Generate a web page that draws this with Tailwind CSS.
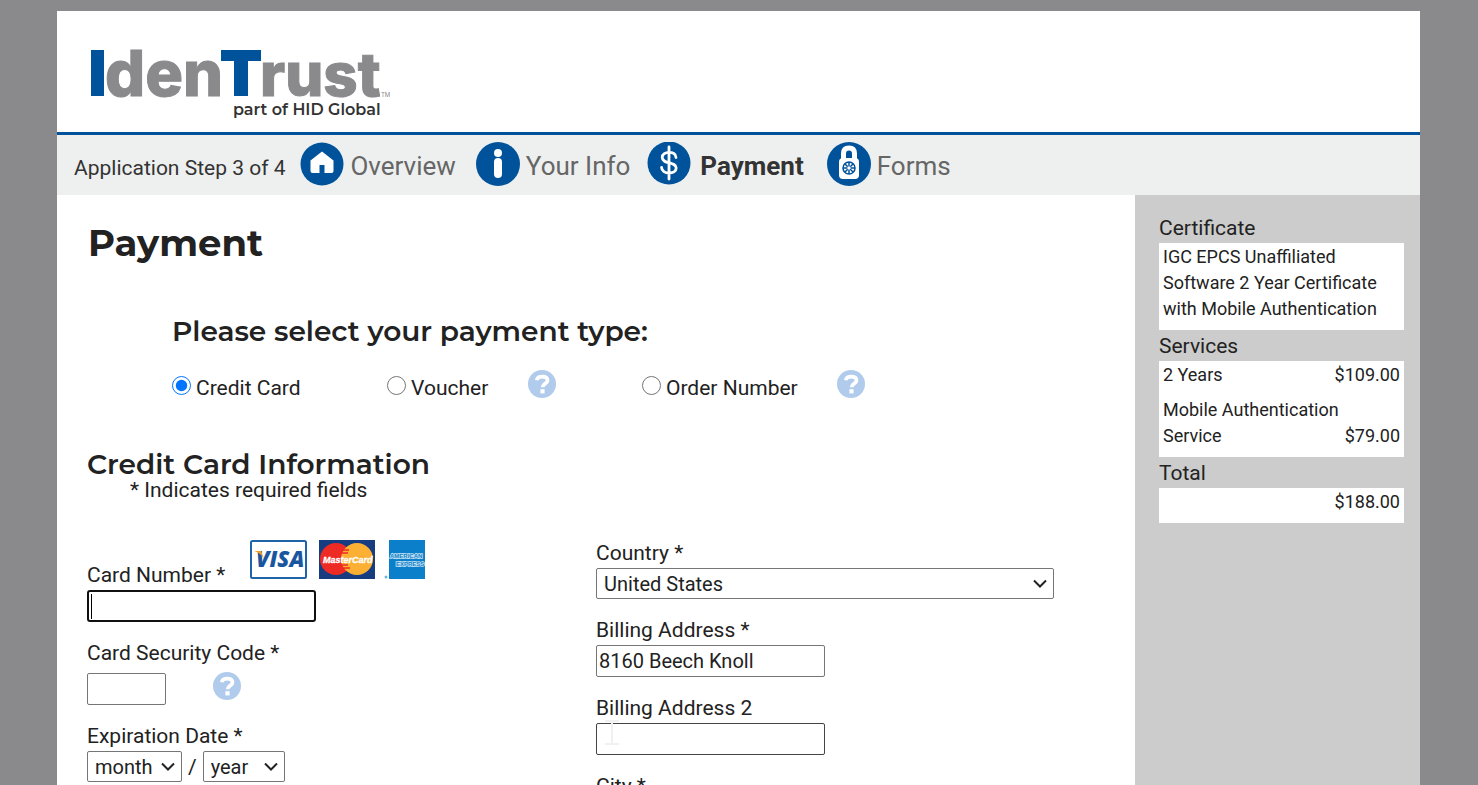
<!DOCTYPE html>
<html lang="en">
<head>
<meta charset="utf-8">
<meta name="viewport" content="width=device-width, initial-scale=1">
<title>IdenTrust - Payment</title>
<script src="https://cdn.jsdelivr.net/npm/@tailwindcss/browser@4"></script>
</head>
<body class="h-screen overflow-hidden bg-[#8a8a8c] pr-[58px] pl-[57px] pt-[11px] font-[Roboto,sans-serif] text-[21px] leading-[26px] text-[#222]">
<svg class="hidden" aria-hidden="true">
  <symbol id="help" viewBox="0 0 28 28">
    <circle cx="14" cy="14" r="14" fill="#b0cbeb"/>
    <path d="M8.800 10.200C9.200 7.400 11.400 6.600 14.200 6.600c3.200 0 5.300 1.300 5.300 3.800 0 3.300-4.900 3.100-4.900 6.800" fill="none" stroke="#fff" stroke-width="3.800"/>
    <rect x="12.400" y="19.200" width="4.200" height="4.200" fill="#fff"/>
  </symbol>
  <symbol id="chevron" viewBox="0 0 14 9">
    <path d="M1 1.500l6 6 6-6" fill="none" stroke="#222" stroke-width="2"/>
  </symbol>
</svg>
<div class="flex min-h-full flex-col bg-white">
  <header class="h-[124px] border-b-3 border-[#00539b] pl-[31px] pt-[32px]">
    <a href="#" aria-label="IdenTrust, part of HID Global">
      <svg class="h-[80px] w-[306px] overflow-visible" viewBox="0 0 306 80">
        <g font-family="Inter, sans-serif" font-weight="800" fill="#8a8a8d" stroke="#8a8a8d">
          <text x="17" y="53" font-size="63">den</text>
          <text x="172" y="53" font-size="60">rust</text>
          <path d="M3 7h13v46H3zM133 7h40v11h-13v35h-14V18h-13z" fill="#00539b" stroke="none"/>
        </g>
        <text x="145" y="72" font-family="Montserrat, sans-serif" font-weight="600" font-size="16" fill="#333">part of HID Global</text>
        <text x="293" y="54" font-family="Inter, sans-serif" font-size="6" fill="#8a8a8d">TM</text>
      </svg>
    </a>
  </header>

  <nav class="flex h-[60px] items-center bg-[#eef0f0] pl-[17px] text-[26px] text-[#666]">
    <span class="pt-[5px] text-[21px] text-[#333]">Application Step 3 of 4</span>
    <a href="#" class="ml-[15px] flex items-center gap-[6px]">
      <svg class="-mt-[3px] size-[44px]" viewBox="0 0 44 44"><circle cx="22" cy="22" r="21.500" fill="#00539b"/><path d="M10.500 18.500L22 9.500l11.500 9V29q0 2-2 2H24.500v-8h-5v8H12.500q-2 0-2-2z" fill="#fff"/></svg>
      <span class="pt-[2px]">Overview</span>
    </a>
    <a href="#" class="ml-[20px] flex items-center gap-[6px]">
      <svg class="-mt-[3px] size-[44px]" viewBox="0 0 44 44"><circle cx="22" cy="22" r="22" fill="#00539b"/><circle cx="22" cy="11" r="4" fill="#fff"/><rect x="18" y="16" width="8" height="20" rx="4" fill="#fff"/></svg>
      <span class="pt-[2px]">Your Info</span>
    </a>
    <a href="#" class="ml-[17px] flex items-center gap-[9px] font-bold text-[#333]">
      <svg class="-mt-[3px] size-[44px]" viewBox="0 0 44 44"><circle cx="22" cy="21" r="21.500" fill="#00539b"/><path d="M22 5v32M29 15.500c0-3.700-3.500-5.200-7-5.200s-6.800 1.800-6.800 5c0 7.500 14 3.700 14 10.700 0 3.500-3.500 5-7.200 5s-7.400-2-7.400-5.500" fill="none" stroke="#fff" stroke-width="2.800" stroke-linecap="round"/></svg>
      <span class="pt-[2px]">Payment</span>
    </a>
    <a href="#" class="ml-[23px] flex items-center gap-[6px]">
      <svg class="-mt-[3px] size-[44px]" viewBox="0 0 44 44"><circle cx="22" cy="22" r="22" fill="#00539b"/><path d="M16.500 18v-6.500q0-5.500 5.500-5.500t5.500 5.500V18" fill="none" stroke="#fff" stroke-width="5"/><rect x="12" y="16" width="20" height="21" rx="4" fill="#fff"/><circle cx="22" cy="26" r="6" fill="none" stroke="#00539b" stroke-width="1.500"/><path d="M22 20v12M16 26h12M18 22l8 8M26 22l-8 8" stroke="#00539b" stroke-width="1.500"/><circle cx="22" cy="26" r="1.800" fill="#fff"/></svg>
      <span class="pt-[2px]">Forms</span>
    </a>
  </nav>

  <div class="flex flex-1">
    <main class="flex-1 pt-[24px]">
      <h1 class="pl-[31px] font-[Montserrat,sans-serif] text-[37px] leading-[48px] font-bold">Payment</h1>
      <fieldset class="mt-[47px] pl-[115px]">
        <legend class="font-[Montserrat,sans-serif] text-[28px] leading-[34px] font-[650]">Please select your payment type:</legend>
        <div class="mt-[23px] flex h-[28px] items-center">
          <label class="flex w-[215px] items-center gap-[5px]"><input type="radio" name="type" checked class="size-[19px] accent-[#0075ff]"><span class="pt-[6px]">Credit Card</span></label>
          <div class="flex w-[255px] items-center justify-between pr-[86px]">
            <label class="flex items-center gap-[5px]"><input type="radio" name="type" class="size-[19px]"><span class="pt-[6px]">Voucher</span></label>
            <button type="button" aria-label="Help on vouchers" class="-mt-[2px]"><svg class="size-[28px]"><use href="#help"/></svg></button>
          </div>
          <div class="flex w-[223px] items-center justify-between">
            <label class="flex items-center gap-[5px]"><input type="radio" name="type" class="size-[19px]"><span class="pt-[6px]">Order Number</span></label>
            <button type="button" aria-label="Help on order numbers" class="-mt-[2px]"><svg class="size-[28px]"><use href="#help"/></svg></button>
          </div>
        </div>
      </fieldset>

      <h2 class="mt-[49px] pl-[30px] font-[Montserrat,sans-serif] text-[28px] leading-[32px] font-[650]">Credit Card Information</h2>
      <p class="-mt-[3px] pl-[73px]">* Indicates required fields</p>

      <form class="mt-[36px] grid grid-cols-2">
        <div class="pl-[30px]">
          <div class="flex h-[49px] items-end">
            <label for="card">Card Number *</label>
            <svg class="mb-[7px] ml-[25px] h-[42px] w-[176px]" viewBox="0 0 176 42" role="img" aria-label="Visa, MasterCard, American Express">
              <rect x="1" y="2" width="55" height="37" rx="1.500" fill="#fff" stroke="#1f63a8" stroke-width="2"/>
              <text x="6" y="28" font-family="Open Sans" font-weight="800" font-style="italic" font-size="22" fill="#1a56a0">VISA</text>
              <path d="M4 12h7l3 8q-3-6-10-8z" fill="#f6a11c"/>
              <rect x="69" y="1" width="56" height="39" fill="#173d80"/>
              <circle cx="86" cy="20" r="16" fill="#ee2a24"/><circle cx="107" cy="20" r="16" fill="#fbb034"/>
              <path d="M91 11h8M91 14h7M91 26h7M92 29h8" stroke="#ee2a24" stroke-width="1.500"/>
              <text x="73" y="24" font-family="Liberation Sans" font-weight="700" font-style="italic" font-size="9" fill="#fff" stroke="#fff" stroke-width=".3">MasterCard</text>
              <rect x="139" y="1" width="36" height="39" fill="#0b7fc9"/>
              <circle cx="136" cy="38" r="1.500" fill="#6fb5dd"/>
              <g font-family="Liberation Sans" font-weight="700" font-size="6" fill="#0b7fc9" stroke="#c5e3f5" stroke-width="1.600" paint-order="stroke"><text x="140" y="19">AMERICAN</text><text x="146" y="27">EXPRESS</text></g>
            </svg>
          </div>
          <div class="relative mt-[2px] w-[229px]">
            <input id="card" type="text" class="block h-[32px] w-full rounded-[3px] border-2 border-[#101010] bg-white px-[3px] text-[20px] caret-transparent outline-none">
            <span class="absolute top-[4px] left-[4px] h-[25px] w-px bg-black"></span>
          </div>
          <label for="code" class="mt-[18px] block">Card Security Code *</label>
          <div class="mt-[7px] flex items-center gap-[47px]">
            <input id="code" type="text" class="h-[32px] w-[79px] rounded-[2px] border border-[#767676] px-[3px] text-[20px]">
            <button type="button" aria-label="Help on the security code" class="-mt-[6px]"><svg class="size-[28px]"><use href="#help"/></svg></button>
          </div>
          <label for="month" class="mt-[18px] block">Expiration Date *</label>
          <div class="mt-[2px] flex items-center gap-[6px]">
            <div class="relative">
              <select id="month" class="block h-[31px] w-[95px] appearance-none rounded-[2px] border border-[#767676] bg-white px-[7px] text-[20px]"><option>month</option></select>
              <svg class="pointer-events-none absolute top-[11px] right-[7px] h-[9px] w-[14px]"><use href="#chevron"/></svg>
            </div>
            <span>/</span>
            <div class="relative">
              <select aria-label="Expiration year" class="block h-[31px] w-[82px] appearance-none rounded-[2px] border border-[#767676] bg-white px-[7px] text-[20px]"><option>year</option></select>
              <svg class="pointer-events-none absolute top-[11px] right-[7px] h-[9px] w-[14px]"><use href="#chevron"/></svg>
            </div>
          </div>
        </div>
        <div>
          <label for="country" class="mt-[1px] block">Country *</label>
          <div class="relative mt-[2px] w-[85%]">
            <select id="country" class="block h-[31px] w-full appearance-none rounded-[2px] border border-[#767676] bg-white px-[7px] text-[20px]"><option>United States</option></select>
            <svg class="pointer-events-none absolute top-[11px] right-[7px] h-[9px] w-[14px]"><use href="#chevron"/></svg>
          </div>
          <label for="address" class="mt-[18px] block">Billing Address *</label>
          <input id="address" type="text" value="8160 Beech Knoll" class="mt-[2px] block h-[32px] w-[229px] rounded-[2px] border border-[#767676] px-[2px] text-[20px]">
          <label for="address2" class="mt-[18px] block">Billing Address 2</label>
          <div class="relative mt-[2px] w-[229px]">
            <input id="address2" type="text" class="block h-[32px] w-full rounded-[2px] border border-[#444] px-[2px] text-[20px]">
            <svg class="pointer-events-none absolute -top-[3px] left-[9px] h-[25px] w-[14px]" viewBox="0 0 14 25"><path d="M0 1h14M7 1v23M0 24h14" fill="none" stroke="#f1f1f1" stroke-width="2"/></svg>
          </div>
          <label for="city" class="mt-[18px] block">City *</label>
          <input id="city" type="text" class="mt-[2px] block h-[32px] w-[229px] rounded-[2px] border border-[#767676] px-[2px] text-[20px]">
        </div>
      </form>
    </main>

    <aside class="w-[285px] bg-[#ccc] pt-[20px] pr-[16px] pl-[24px]">
      <h2 class="pb-[2px]">Certificate</h2>
      <p class="bg-white px-[4px] pt-[1px] pb-[8px] text-[18px]">IGC EPCS Unaffiliated Software 2 Year Certificate with Mobile Authentication</p>
      <h2 class="pt-[3px] pb-[2px]">Services</h2>
      <dl class="bg-white px-[4px] pt-[1px] pb-[8px] text-[18px]">
        <div class="flex items-end justify-between"><dt>2 Years</dt><dd>$109.00</dd></div>
        <div class="mt-[9px] flex items-end"><dt class="w-[180px]">Mobile Authentication Service</dt><dd class="ml-auto">$79.00</dd></div>
      </dl>
      <h2 class="pt-[3px] pb-[2px]">Total</h2>
      <p class="bg-white px-[4px] pt-[1px] pb-[8px] text-right text-[18px]">$188.00</p>
    </aside>
  </div>
</div>
</body>
</html>
